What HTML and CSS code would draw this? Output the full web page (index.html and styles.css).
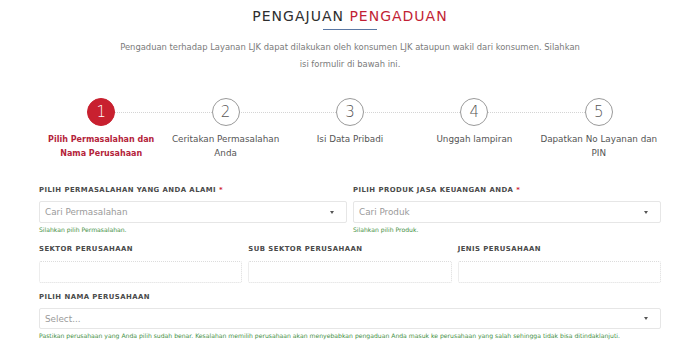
FILE: index.html
```html
<!DOCTYPE html>
<html lang="id">
<head>
<meta charset="utf-8">
<title>Pengajuan Pengaduan</title>
<link rel="stylesheet" href="styles.css">
</head>
<body>
<div class="page">
  <header class="head">
    <h1 class="title">PENGAJUAN <span class="red">PENGADUAN</span></h1>
    <div class="underline"></div>
    <p class="intro">Pengaduan terhadap Layanan LJK dapat dilakukan oleh konsumen LJK ataupun wakil dari konsumen. Silahkan<br>isi formulir di bawah ini.</p>
  </header>

  <ol class="steps">
    <li class="step active"><span class="circle">1</span><span class="step-label">Pilih Permasalahan dan Nama Perusahaan</span></li>
    <li class="step"><span class="circle">2</span><span class="step-label">Ceritakan Permasalahan Anda</span></li>
    <li class="step"><span class="circle">3</span><span class="step-label">Isi Data Pribadi</span></li>
    <li class="step"><span class="circle">4</span><span class="step-label">Unggah lampiran</span></li>
    <li class="step"><span class="circle">5</span><span class="step-label">Dapatkan No Layanan dan PIN</span></li>
  </ol>

  <form class="form">
    <div class="row two">
      <div class="field">
        <label class="label">PILIH PERMASALAHAN YANG ANDA ALAMI <span class="req">*</span></label>
        <div class="select"><span class="ph">Cari Permasalahan</span><span class="caret"></span></div>
        <div class="help">Silahkan pilih Permasalahan.</div>
      </div>
      <div class="field">
        <label class="label">PILIH PRODUK JASA KEUANGAN ANDA <span class="req">*</span></label>
        <div class="select"><span class="ph">Cari Produk</span><span class="caret"></span></div>
        <div class="help">Silahkan pilih Produk.</div>
      </div>
    </div>
    <div class="row three">
      <div class="field">
        <label class="label">SEKTOR PERUSAHAAN</label>
        <div class="input disabled"></div>
      </div>
      <div class="field">
        <label class="label">SUB SEKTOR PERUSAHAAN</label>
        <div class="input disabled"></div>
      </div>
      <div class="field">
        <label class="label">JENIS PERUSAHAAN</label>
        <div class="input disabled"></div>
      </div>
    </div>
    <div class="row one">
      <div class="field">
        <label class="label">PILIH NAMA PERUSAHAAN</label>
        <div class="select short"><span class="ph">Select...</span><span class="caret"></span></div>
        <div class="help">Pastikan perusahaan yang Anda pilih sudah benar. Kesalahan memilih perusahaan akan menyebabkan pengaduan Anda masuk ke perusahaan yang salah sehingga tidak bisa ditindaklanjuti.</div>
      </div>
    </div>
  </form>
</div>
</body>
</html>
```

FILE: styles.css
```css
* { box-sizing: border-box; }
html, body { margin: 0; padding: 0; background: #fff; }
body {
  font-family: "DejaVu Sans", "Open Sans", sans-serif;
  color: #444;
  width: 700px;
  height: 347px;
  overflow: hidden;
}
.page {
  width: 622px;
  margin: 0 auto;
  padding-top: 7px;
}
.head { text-align: center; }
.title {
  margin: 0;
  font-size: 14px;
  line-height: 18px;
  font-weight: 500;
  letter-spacing: 1px;
  color: #2e2e2e;
}
.red { color: #c21f35; }
.underline {
  width: 54px;
  height: 1px;
  background: #5a77a3;
  margin: 4px auto 0;
}
.intro {
  margin: 9px 0 0;
  font-size: 8.4px;
  line-height: 17px;
  color: #7a7a7a;
}

.steps {
  list-style: none;
  margin: 25px 0 0;
  padding: 0;
  display: grid;
  grid-template-columns: repeat(5, 1fr);
}
.step {
  position: relative;
  display: flex;
  flex-direction: column;
  align-items: center;
  text-align: center;
}
.step + .step::before {
  content: "";
  position: absolute;
  top: 14px;
  right: 50%;
  width: 100%;
  border-top: 1px dotted #d4d4d4;
  z-index: 0;
}
.circle {
  position: relative;
  z-index: 1;
  width: 28px;
  height: 28px;
  border-radius: 50%;
  border: 1px solid #9a9a9a;
  background: #fff;
  color: #555;
  font-size: 15px;
  font-weight: 300;
  line-height: 26px;
  text-align: center;
}
.step.active .circle {
  background: #c8202f;
  border-color: #c8202f;
  color: #fff;
}
.step-label {
  margin-top: 7px;
  padding: 0;
  font-size: 8.8px;
  line-height: 13.5px;
  color: #555;
}
.step.active .step-label {
  color: #b4233a;
  font-weight: bold;
  font-size: 8px;
  padding: 0 6px;
}

.form { margin-top: 25px; }
.row { display: grid; gap: 6px; }
.row.two { grid-template-columns: 1fr 1fr; }
.row.three { grid-template-columns: 1fr 1fr 1fr; margin-top: 10px; }
.row.one { grid-template-columns: 1fr; margin-top: 9px; }
.field { display: flex; flex-direction: column; }
.label {
  display: block;
  font-size: 6.9px;
  line-height: 10px;
  font-weight: bold;
  letter-spacing: 0.45px;
  color: #4a4a4a;
  margin-bottom: 6px;
}
.row.three .label { margin-bottom: 7px; }
.req { color: #d0283a; }
.select, .input {
  height: 22px;
  border: 1px solid #e6e6e6;
  border-radius: 2px;
  background: #fff;
  display: flex;
  align-items: center;
  justify-content: space-between;
  padding: 0 12px 0 5px;
}
.select.short { height: 21px; }
.input.disabled { border: 1px dotted #dcdcdc; }
.ph {
  font-size: 8.8px;
  color: #9a9a9a;
}
.caret {
  width: 0;
  height: 0;
  border-left: 2.5px solid transparent;
  border-right: 2.5px solid transparent;
  border-top: 3px solid #555;
}
.help {
  margin-top: 3px;
  font-size: 6.1px;
  line-height: 8px;
  color: #3f8f3f;
}
```
